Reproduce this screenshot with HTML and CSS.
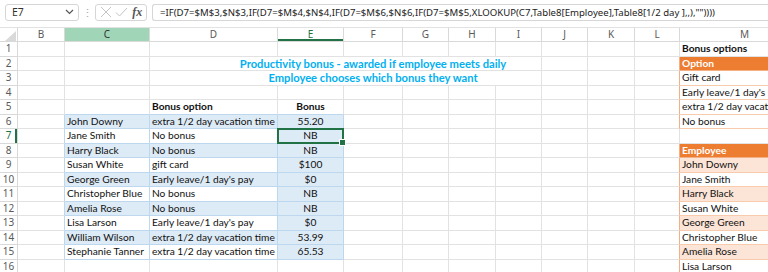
FILE: index.html
```html
<!DOCTYPE html>
<html lang="en">

<head>
    <meta charset="UTF-8">
    <meta name="viewport" content="width=device-width, initial-scale=1.0">
    <title>Bonus sheet</title>
<link rel="stylesheet" href="styles.css">
</head>

<body>
    <div class="formula-bar">
      <div class="name-box">
        <span>E7</span>
        <svg width="9" height="6" viewBox="0 0 9 6"><path d="M1 1l3.5 3.5L8 1" fill="none" stroke="#555" stroke-width="1.2"/></svg>
      </div>
      <div class="grip">&#8942;</div>
      <div class="fx-box">
        <svg width="12" height="12" viewBox="0 0 12 12"><path d="M1 1l10 10M11 1L1 11" stroke="#c4c4c4" stroke-width="1"/></svg>
        <svg width="13" height="12" viewBox="0 0 13 12"><path d="M1 6.5l3.5 3.5L12 2" fill="none" stroke="#c4c4c4" stroke-width="1"/></svg>
        <span class="fx">fx</span>
      </div>
      <div class="formula">=IF(D7=$M$3,$N$3,IF(D7=$M$4,$N$4,IF(D7=$M$6,$N$6,IF(D7=$M$5,XLOOKUP(C7,Table8[Employee],Table8[1/2 day ],,),""))))</div>
    </div>

    <table class="sheet">
      <colgroup>
        <col style="width:18px"><col style="width:47px"><col style="width:85px"><col style="width:128px">
        <col style="width:66px"><col style="width:59px"><col style="width:46px"><col style="width:47px">
        <col style="width:46px"><col style="width:46px"><col style="width:47px"><col style="width:45px">
        <col style="width:130px">
      </colgroup>
      <tr class="col-heads">
        <th class="corner"><svg width="11" height="10" viewBox="0 0 11 10"><path d="M11 0v10H0z" fill="#d9d9d9"/></svg></th>
        <th>B</th><th class="hl-col">C</th><th>D</th><th class="act-col">E</th><th>F</th><th>G</th><th>H</th><th>I</th><th>J</th><th>K</th><th>L</th><th>M</th>
      </tr>
      <tr>
        <th class="rn">1</th><td></td><td></td><td></td><td></td><td></td><td></td><td></td><td></td><td></td><td></td><td></td><td class="b">Bonus options</td>
      </tr>
      <tr>
        <th class="rn">2</th><td></td><td></td><td colspan="6" class="title">Productivity bonus - awarded if employee meets daily</td><td></td><td></td><td class="right-or"></td><td class="or-head">Option</td>
      </tr>
      <tr>
        <th class="rn">3</th><td></td><td></td><td colspan="6" class="title">Employee chooses which bonus they want</td><td></td><td></td><td class="right-or"></td><td class="or-cell">Gift card</td>
      </tr>
      <tr>
        <th class="rn">4</th><td></td><td></td><td></td><td></td><td></td><td></td><td></td><td></td><td></td><td></td><td class="right-or"></td><td class="or-cell">Early leave/1 day's pay</td>
      </tr>
      <tr>
        <th class="rn">5</th><td></td><td class="t-top"></td><td class="t-top b">Bonus option</td><td class="t-top b c">Bonus</td><td></td><td></td><td></td><td></td><td></td><td></td><td class="right-or"></td><td class="or-cell">extra 1/2 day vacation time</td>
      </tr>
      <tr class="band">
        <th class="rn">6</th><td class="t-left"></td><td class="t">John Downy</td><td class="t">extra 1/2 day vacation time</td><td class="t e">55.20</td><td></td><td></td><td></td><td></td><td></td><td></td><td class="right-or"></td><td class="or-cell">No bonus</td>
      </tr>
      <tr>
        <th class="rn act-row">7</th><td class="t-left"></td><td class="t">Jane Smith</td><td class="t">No bonus</td><td class="t e active">NB</td><td></td><td></td><td></td><td></td><td></td><td></td><td></td><td></td>
      </tr>
      <tr class="band">
        <th class="rn">8</th><td class="t-left"></td><td class="t">Harry Black</td><td class="t">No bonus</td><td class="t e">NB</td><td></td><td></td><td></td><td></td><td></td><td></td><td class="right-or"></td><td class="or-head">Employee</td>
      </tr>
      <tr>
        <th class="rn">9</th><td class="t-left"></td><td class="t">Susan White</td><td class="t">gift card</td><td class="t e">$100</td><td></td><td></td><td></td><td></td><td></td><td></td><td class="right-or"></td><td class="or-cell or-band">John Downy</td>
      </tr>
      <tr class="band">
        <th class="rn">10</th><td class="t-left"></td><td class="t">George Green</td><td class="t">Early leave/1 day's pay</td><td class="t e">$0</td><td></td><td></td><td></td><td></td><td></td><td></td><td class="right-or"></td><td class="or-cell">Jane Smith</td>
      </tr>
      <tr>
        <th class="rn">11</th><td class="t-left"></td><td class="t">Christopher Blue</td><td class="t">No bonus</td><td class="t e">NB</td><td></td><td></td><td></td><td></td><td></td><td></td><td class="right-or"></td><td class="or-cell or-band">Harry Black</td>
      </tr>
      <tr class="band">
        <th class="rn">12</th><td class="t-left"></td><td class="t">Amelia Rose</td><td class="t">No bonus</td><td class="t e">NB</td><td></td><td></td><td></td><td></td><td></td><td></td><td class="right-or"></td><td class="or-cell">Susan White</td>
      </tr>
      <tr>
        <th class="rn">13</th><td class="t-left"></td><td class="t">Lisa Larson</td><td class="t">Early leave/1 day's pay</td><td class="t e">$0</td><td></td><td></td><td></td><td></td><td></td><td></td><td class="right-or"></td><td class="or-cell or-band">George Green</td>
      </tr>
      <tr class="band">
        <th class="rn">14</th><td class="t-left"></td><td class="t">William Wilson</td><td class="t">extra 1/2 day vacation time</td><td class="t e">53.99</td><td></td><td></td><td></td><td></td><td></td><td></td><td class="right-or"></td><td class="or-cell">Christopher Blue</td>
      </tr>
      <tr>
        <th class="rn">15</th><td class="t-left"></td><td class="t">Stephanie Tanner</td><td class="t">extra 1/2 day vacation time</td><td class="t e">65.53</td><td></td><td></td><td></td><td></td><td></td><td></td><td class="right-or"></td><td class="or-cell or-band">Amelia Rose</td>
      </tr>
      <tr>
        <th class="rn">16</th><td></td><td></td><td></td><td></td><td></td><td></td><td></td><td></td><td></td><td></td><td class="right-or"></td><td class="or-cell">Lisa Larson</td>
      </tr>
    </table>
</body>

</html>
```

FILE: styles.css
```css
html, body {
  margin: 0;
  overflow: hidden;
  background: #fff;
}

body {
  font-family: "Noto Sans", sans-serif;
  color: #222;
}

/* formula bar */
.formula-bar {
  display: flex;
  align-items: center;
  height: 27px;
  padding-left: 5px;
  box-sizing: border-box;
  padding-bottom: 3px;
}

.name-box {
  display: flex;
  align-items: center;
  justify-content: space-between;
  width: 74px;
  height: 17px;
  box-sizing: border-box;
  border: 1px solid #d6d6d6;
  border-radius: 3px;
  padding: 0 4px 0 6px;
  font-size: 10.5px;
  color: #333;
}

.grip {
  width: 16px;
  text-align: center;
  color: #aaa;
  font-size: 11px;
}

.fx-box {
  display: flex;
  align-items: center;
  justify-content: space-around;
  width: 52px;
  height: 17px;
  box-sizing: border-box;
  border: 1px solid #d6d6d6;
  border-radius: 3px;
  padding: 0 2px;
}

.fx {
  font-family: "Liberation Serif", serif;
  font-style: italic;
  font-weight: bold;
  font-size: 12px;
  color: #555;
}

.formula {
  flex: 1;
  height: 17px;
  margin-left: 5px;
  box-sizing: border-box;
  border: 1px solid #d6d6d6;
  border-right: 0;
  border-radius: 3px 0 0 3px;
  padding-left: 7px;
  font-size: 9.6px;
  line-height: 15px;
  white-space: nowrap;
  overflow: hidden;
  color: #222;
}

/* grid */
.sheet {
  table-layout: fixed;
  border-collapse: separate;
  border-spacing: 0;
  width: 810px;
  font-family: Lato, sans-serif;
  font-size: 10.2px;
}

.sheet tr {
  height: 14.5px;
}

.sheet tr.col-heads {
  height: 14px;
}

.sheet td {
  box-sizing: border-box;
  padding: 0 2px;
  border-right: 1px solid #e2e2e2;
  border-bottom: 1px solid #e2e2e2;
  white-space: nowrap;
  overflow: hidden;
  line-height: 13px;
  color: #111;
}

.sheet th {
  box-sizing: border-box;
  font-family: "Noto Sans", sans-serif;
  font-weight: normal;
  font-size: 10px;
  color: #5a5a5a;
  padding: 0;
  border-right: 1px solid #d9d9d9;
  border-bottom: 1px solid #d9d9d9;
  line-height: 13px;
}

.sheet .col-heads th {
  border-top: 1px solid #e2e2e2;
}

.sheet .corner {
  text-align: right;
  vertical-align: bottom;
}

.corner svg {
  display: block;
  margin-left: auto;
  margin-right: 1px;
}

.sheet .hl-col {
  background: #a0d6b7;
  color: #333;
}

.sheet .act-col {
  color: #217346;
  box-shadow: inset 0 -2px 0 #217346;
}

.sheet .rn {
  text-align: center;
}

.sheet .act-row {
  color: #217346;
  box-shadow: inset -2px 0 0 #217346;
}

.sheet .b {
  font-weight: bold;
}

.sheet .c {
  text-align: center;
}

.sheet .title {
  color: #00b0f0;
  font-weight: bold;
  font-size: 11.2px;
  text-align: center;
  padding-left: 57px;
}

/* employee table */
.sheet .t-top {
  border-bottom-color: #bdd7ee;
}

.sheet .t-left {
  border-right-color: #bdd7ee;
}

.sheet .t {
  border-right-color: #bdd7ee;
  border-bottom-color: #bdd7ee;
}

.sheet .band .t {
  background: #ddebf7;
}

.sheet .e {
  background: #ddebf7;
  text-align: center;
}

.sheet .active {
  position: relative;
  overflow: visible;
}

.active::after {
  content: "";
  position: absolute;
  left: -1px;
  top: -1px;
  right: -1px;
  bottom: -1px;
  border: 2px solid #217346;
}

.active::before {
  content: "";
  position: absolute;
  right: -3px;
  bottom: -3px;
  width: 5px;
  height: 5px;
  background: #217346;
  border: 1px solid #fff;
  z-index: 1;
}

/* lookup tables */
.sheet .right-or {
  border-right-color: #f4b084;
}

.sheet .or-head {
  background: #ed7d31;
  color: #fff;
  font-weight: bold;
  border-bottom-color: #f4b084;
}

.sheet .or-cell {
  border-bottom-color: #f8cbad;
}

.sheet .or-band {
  background: #fce4d6;
}
```
